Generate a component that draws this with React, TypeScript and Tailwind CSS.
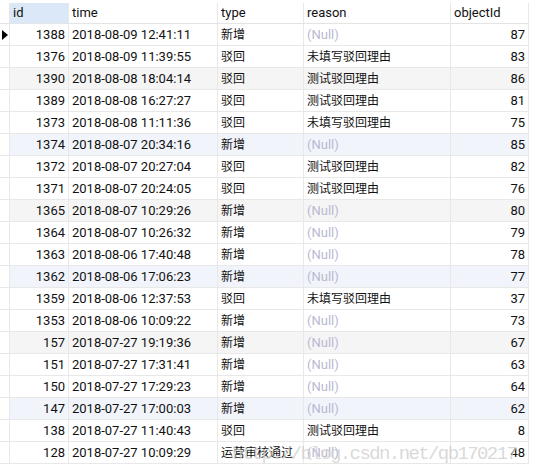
const rows: [string, string, string, string | null, string][] = [
  ["1388", "2018-08-09 12:41:11", "新增", null, "87"],
  ["1376", "2018-08-09 11:39:55", "驳回", "未填写驳回理由", "83"],
  ["1390", "2018-08-08 18:04:14", "驳回", "测试驳回理由", "86"],
  ["1389", "2018-08-08 16:27:27", "驳回", "测试驳回理由", "81"],
  ["1373", "2018-08-08 11:11:36", "驳回", "未填写驳回理由", "75"],
  ["1374", "2018-08-07 20:34:16", "新增", null, "85"],
  ["1372", "2018-08-07 20:27:04", "驳回", "测试驳回理由", "82"],
  ["1371", "2018-08-07 20:24:05", "驳回", "测试驳回理由", "76"],
  ["1365", "2018-08-07 10:29:26", "新增", null, "80"],
  ["1364", "2018-08-07 10:26:32", "新增", null, "79"],
  ["1363", "2018-08-06 17:40:48", "新增", null, "78"],
  ["1362", "2018-08-06 17:06:23", "新增", null, "77"],
  ["1359", "2018-08-06 12:37:53", "驳回", "未填写驳回理由", "37"],
  ["1353", "2018-08-06 10:09:22", "新增", null, "73"],
  ["157", "2018-07-27 19:19:36", "新增", null, "67"],
  ["151", "2018-07-27 17:31:41", "新增", null, "63"],
  ["150", "2018-07-27 17:29:23", "新增", null, "64"],
  ["147", "2018-07-27 17:00:03", "新增", null, "62"],
  ["138", "2018-07-27 11:40:43", "驳回", "测试驳回理由", "8"],
  ["128", "2018-07-27 10:09:29", "运营审核通过", null, "48"],
]

const cols = "grid grid-cols-[10px_59px_149px_86px_147px_78px]"
const cell = "flex items-center border-r border-[#e8e8e8] overflow-hidden whitespace-nowrap"

function rowBg(i: number) {
  if (i % 3 !== 2) return "bg-white"
  return i % 6 === 2 ? "bg-[#f5f5f5]" : "bg-[#f1f5fb]"
}

export default function App() {
  return (
    <div
      className="relative w-[536px] h-[470px] bg-white pt-[3px] text-[13px] text-[#111] font-['Roboto','Noto_Sans_CJK_SC',sans-serif]"
    >
      {/* header */}
      <div className={`${cols} h-[21px] border-b border-[#e4e4e4] w-[529px]`}>
        <div className={cell} />
        <div className={`${cell} bg-[#dae8f7] pl-[3px]`}>id</div>
        <div className={`${cell} pl-[3px]`}>time</div>
        <div className={`${cell} pl-[3px]`}>type</div>
        <div className={`${cell} pl-[3px]`}>reason</div>
        <div className={`${cell} pl-[3px]`}>objectId</div>
      </div>

      {rows.map((r, i) => (
        <div key={r[0]} className={`${cols} h-[22px] border-b border-[#e8e8e8] w-[529px]`}>
          <div className={`${cell} bg-white justify-center`}>
            {i === 0 && (
              <svg width="6" height="10" viewBox="0 0 6 10">
                <path d="M0 0 L6 5 L0 10 Z" fill="#000" />
              </svg>
            )}
          </div>
          <div className={`${cell} ${rowBg(i)} justify-end pr-[3px]`}>{r[0]}</div>
          <div className={`${cell} ${rowBg(i)} pl-[3px]`}>{r[1]}</div>
          <div className={`${cell} ${rowBg(i)} pl-[3px] text-[12px]`}>{r[2]}</div>
          <div className={`${cell} ${rowBg(i)} pl-[3px]`}>
            {r[3] ? (
              <span className="text-[12px]">{r[3]}</span>
            ) : (
              <span className="text-[#b9b9d2]">(Null)</span>
            )}
          </div>
          <div className={`${cell} ${rowBg(i)} justify-end pr-[3px]`}>{r[4]}</div>
        </div>
      ))}

      {/* watermark */}
      <div className="pointer-events-none absolute left-[232px] top-[440px] text-[19px] tracking-[-1.6px] text-[#cfcfcf]/80 font-['Liberation_Mono',monospace]">
        http://blog.csdn.net/qb170217
      </div>
    </div>
  )
}
